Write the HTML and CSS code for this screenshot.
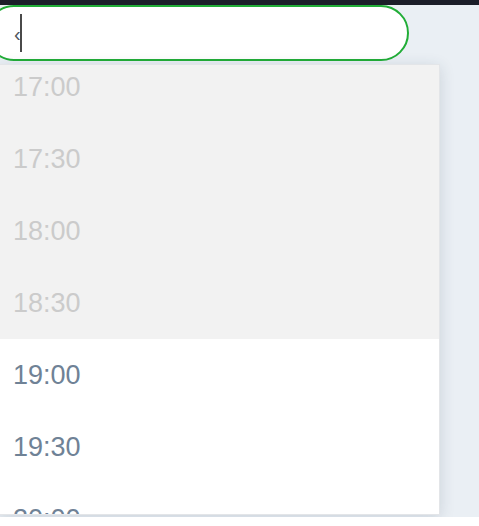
FILE: index.html
```html
<!DOCTYPE html>
<html lang="en">
<head>
<meta charset="utf-8">
<title>Time picker</title>
<link rel="stylesheet" href="styles.css">
</head>
<body>
<div class="topbar"></div>
<div class="stage">
  <div class="field">
    <span class="prefix">‹</span><span class="caret"></span>
  </div>
  <div class="dropdown">
    <ul class="list">
      <li class="item disabled">17:00</li>
      <li class="item disabled">17:30</li>
      <li class="item disabled">18:00</li>
      <li class="item disabled">18:30</li>
      <li class="item">19:00</li>
      <li class="item">19:30</li>
      <li class="item">20:00</li>
    </ul>
  </div>
</div>
</body>
</html>
```

FILE: styles.css
```css
html, body {
  margin: 0;
  padding: 0;
  background: #ffffff;
  font-family: "Liberation Sans", Arial, sans-serif;
  overflow: hidden;
}

.topbar {
  height: 5px;
  background: #1b1e29;
}

.stage {
  height: 512px;
  background: #eaeff4;
  display: flex;
  flex-direction: column;
  overflow: visible;
}

.field {
  box-sizing: border-box;
  margin-left: -14px;
  width: 423px;
  height: 56px;
  border: 2px solid #21ad37;
  border-radius: 28px;
  background: #ffffff;
  display: flex;
  align-items: center;
  padding-left: 26px;
  flex-shrink: 0;
}

.prefix {
  font-size: 20px;
  color: #4f555c;
  line-height: 20px;
  margin-top: 1px;
  width: 6px;
}

.caret {
  width: 2px;
  height: 38px;
  background: #4a4a4a;
}

.dropdown {
  box-sizing: border-box;
  margin-top: 3px;
  margin-left: -1px;
  width: 441px;
  height: 451px;
  border: 1px solid #e3e5e8;
  background: #ffffff;
  overflow: hidden;
  flex-shrink: 0;
  box-shadow: 0 3px 14px rgba(40, 60, 90, 0.16);
  position: relative;
  z-index: 2;
}

.list {
  list-style: none;
  margin: -14px 0 0 0;
  padding: 0;
}

.item {
  height: 72px;
  line-height: 72px;
  padding-left: 13px;
  font-size: 27px;
  color: #6f8296;
}

.item.disabled {
  background: #f2f2f2;
  color: #cbcbcb;
}
```
